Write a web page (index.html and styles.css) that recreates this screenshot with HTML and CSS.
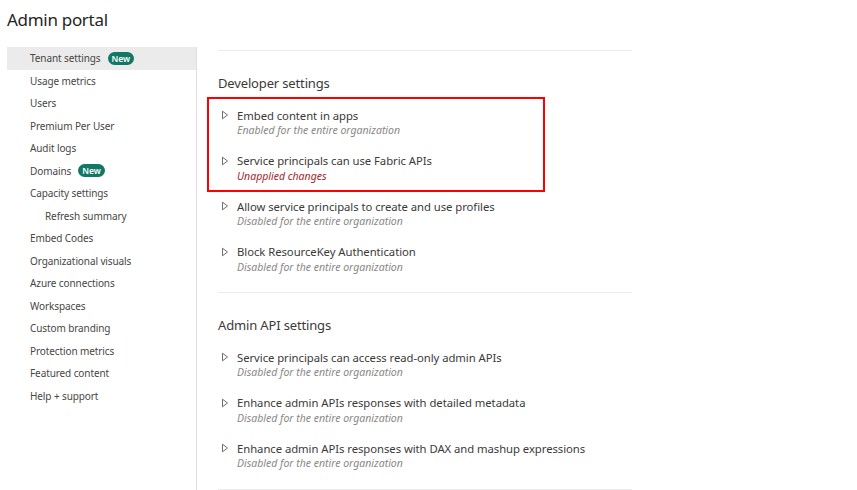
FILE: index.html
```html
<!DOCTYPE html>
<html lang="en">
<head>
<meta charset="utf-8">
<title>Admin portal</title>
<link rel="stylesheet" href="styles.css">
</head>
<body>
<header class="page-header">
  <h1 class="page-title">Admin portal</h1>
</header>
<div class="layout">
  <nav class="sidebar">
    <a class="nav-item selected">Tenant settings <span class="badge">New</span></a>
    <a class="nav-item">Usage metrics</a>
    <a class="nav-item">Users</a>
    <a class="nav-item">Premium Per User</a>
    <a class="nav-item">Audit logs</a>
    <a class="nav-item">Domains <span class="badge">New</span></a>
    <a class="nav-item">Capacity settings</a>
    <a class="nav-item sub">Refresh summary</a>
    <a class="nav-item">Embed Codes</a>
    <a class="nav-item">Organizational visuals</a>
    <a class="nav-item">Azure connections</a>
    <a class="nav-item">Workspaces</a>
    <a class="nav-item">Custom branding</a>
    <a class="nav-item">Protection metrics</a>
    <a class="nav-item">Featured content</a>
    <a class="nav-item">Help + support</a>
  </nav>
  <main class="content">
    <hr class="sep">
    <section class="section">
      <h2 class="section-title">Developer settings</h2>
      <div class="highlight">
        <div class="setting">
          <div class="setting-title"><svg class="chev" viewBox="0 0 8 10"><path d="M1.5 1.2 L6.5 5 L1.5 8.8 Z" /></svg>Embed content in apps</div>
          <div class="setting-status">Enabled for the entire organization</div>
        </div>
        <div class="setting">
          <div class="setting-title"><svg class="chev" viewBox="0 0 8 10"><path d="M1.5 1.2 L6.5 5 L1.5 8.8 Z" /></svg>Service principals can use Fabric APIs</div>
          <div class="setting-status warn">Unapplied changes</div>
        </div>
      </div>
      <div class="setting">
        <div class="setting-title"><svg class="chev" viewBox="0 0 8 10"><path d="M1.5 1.2 L6.5 5 L1.5 8.8 Z" /></svg>Allow service principals to create and use profiles</div>
        <div class="setting-status">Disabled for the entire organization</div>
      </div>
      <div class="setting">
        <div class="setting-title"><svg class="chev" viewBox="0 0 8 10"><path d="M1.5 1.2 L6.5 5 L1.5 8.8 Z" /></svg>Block ResourceKey Authentication</div>
        <div class="setting-status">Disabled for the entire organization</div>
      </div>
    </section>
    <hr class="sep">
    <section class="section">
      <h2 class="section-title">Admin API settings</h2>
      <div class="setting">
        <div class="setting-title"><svg class="chev" viewBox="0 0 8 10"><path d="M1.5 1.2 L6.5 5 L1.5 8.8 Z" /></svg>Service principals can access read-only admin APIs</div>
        <div class="setting-status">Disabled for the entire organization</div>
      </div>
      <div class="setting">
        <div class="setting-title"><svg class="chev" viewBox="0 0 8 10"><path d="M1.5 1.2 L6.5 5 L1.5 8.8 Z" /></svg>Enhance admin APIs responses with detailed metadata</div>
        <div class="setting-status">Disabled for the entire organization</div>
      </div>
      <div class="setting">
        <div class="setting-title"><svg class="chev" viewBox="0 0 8 10"><path d="M1.5 1.2 L6.5 5 L1.5 8.8 Z" /></svg>Enhance admin APIs responses with DAX and mashup expressions</div>
        <div class="setting-status">Disabled for the entire organization</div>
      </div>
    </section>
    <hr class="sep">
  </main>
</div>
</body>
</html>
```
FILE: styles.css
```css
* { box-sizing: border-box; }
html, body {
  margin: 0;
  padding: 0;
  background: #ffffff;
  font-family: "Noto Sans", "Open Sans", "Liberation Sans", sans-serif;
  color: #323130;
  height: 100%;
  overflow: hidden;
}
.page-header {
  height: 47px;
  padding: 7px 0 0 7px;
}
.page-title {
  margin: 0;
  font-size: 17px;
  font-weight: 400;
  line-height: 26px;
  letter-spacing: -0.3px;
  color: #252423;
}
.layout {
  display: flex;
  height: 443px;
  padding-left: 7px;
}
.sidebar {
  width: 190px;
  flex: none;
  border-right: 1px solid #e1dfdd;
  display: flex;
  flex-direction: column;
}
.nav-item {
  display: flex;
  align-items: center;
  gap: 7px;
  height: 22.5px;
  padding-left: 23px;
  font-size: 10px;
  letter-spacing: -0.1px;
  color: #484644;
  white-space: nowrap;
}
.nav-item.selected { background: #ebebeb; }
.nav-item.sub { padding-left: 38px; }
.badge {
  display: inline-flex;
  align-items: center;
  height: 13px;
  padding: 0 4px;
  border-radius: 7px;
  background: #117865;
  color: #ffffff;
  font-size: 8.5px;
  font-weight: 600;
  letter-spacing: 0;
  line-height: 13px;
}
.content {
  flex: none;
  width: 435px;
  padding: 3px 0 0 21px;
}
.sep {
  margin: 0;
  border: 0;
  border-top: 1px solid #edebe9;
  width: 414px;
}
.section { padding: 22px 0 11px 0; }
.section-title {
  margin: 0 0 6px 0;
  font-size: 13px;
  font-weight: 400;
  line-height: 20px;
  letter-spacing: -0.15px;
  color: #3b3a39;
}
.highlight {
  border: 2px solid #ff0000;
  margin: -2px 0 -2px -11px;
  padding-left: 9px;
  width: 338px;
}
.setting {
  height: 45.5px;
  padding-top: 8px;
}
.setting-title {
  display: flex;
  align-items: center;
  height: 16px;
  font-size: 11.3px;
  letter-spacing: -0.05px;
  color: #3b3a39;
  white-space: nowrap;
}
.chev {
  width: 8px;
  height: 10px;
  margin: 0 8px 0 3px;
  flex: none;
  fill: none;
  stroke: #605e5c;
  stroke-width: 0.9;
  stroke-linejoin: round;
}
.setting-status {
  height: 14px;
  line-height: 14px;
  padding-left: 19px;
  font-size: 10.5px;
  font-style: italic;
  color: #8a8886;
  white-space: nowrap;
}
.setting-status.warn { color: #a4262c; }
```
